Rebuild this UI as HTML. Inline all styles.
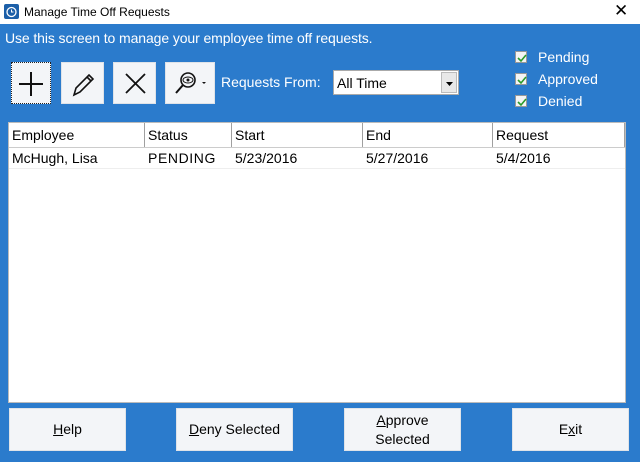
<!DOCTYPE html><html><head><style>
*{margin:0;padding:0;box-sizing:border-box}
body{width:640px;height:462px;background:#2b7bcc;font-family:"Liberation Sans",sans-serif;position:relative;overflow:hidden;color:#000}
.a{position:absolute}
.title{left:0;top:0;width:640px;height:24px;background:#fff;font-size:12px}
.btn{position:absolute;background:#f3f5f8;border:1px solid #dfe3e8}
.w{color:#fff;font-size:14px}
.cb{position:absolute;width:12px;height:12px;background:#f4f4f4;border:1px solid #999}
.cb svg{position:absolute;left:0;top:0}
.th{position:absolute;top:0;height:24px;border-right:1px solid #a0a0a0;font-size:14px;padding:4px 3px}
.td{position:absolute;top:25px;font-size:14px;padding:2px 3px}
.bb{position:absolute;top:408px;width:117px;height:43px;background:#f3f5f8;border:1px solid #dfe3e8;font-size:14px;text-align:center;display:flex;align-items:center;justify-content:center;line-height:19px}
</style></head><body>
<div class="a title">
<div class="a" style="left:4px;top:4px;width:15px;height:15px;background:#1c5fa8;border-radius:2px"><svg width="15" height="15"><circle cx="7.5" cy="8" r="4.5" fill="none" stroke="#fff" stroke-width="1.3"/><path d="M7.5 5.5V8H9.5" stroke="#fff" fill="none"/></svg></div>
<div class="a" style="left:24px;top:5px">Manage Time Off Requests</div>
<div class="a" style="left:614px;top:1px;font-size:17px">✕</div>
</div>
<div class="a w" style="left:5px;top:30px;letter-spacing:-0.1px">Use this screen to manage your employee time off requests.</div>
<div class="btn" style="left:11px;top:62px;width:40px;height:42px;border:1px dotted #222"><svg width="40" height="42"><path d="M19 9V33M7 21H31" stroke="#111" stroke-width="2"/></svg></div>
<div class="btn" style="left:61px;top:62px;width:43px;height:42px"><svg width="43" height="42"><path d="M12 32L14 25L27 12L31 16L18 29Z M25 14L29 18" stroke="#111" stroke-width="1.6" fill="none"/></svg></div>
<div class="btn" style="left:113px;top:62px;width:43px;height:42px"><svg width="43" height="42"><path d="M12 11L31 30M31 11L12 30" stroke="#111" stroke-width="1.8"/></svg></div>
<div class="btn" style="left:165px;top:62px;width:50px;height:42px"><svg width="50" height="42"><circle cx="22" cy="17" r="7" fill="none" stroke="#111" stroke-width="1.6"/><ellipse cx="22" cy="17" rx="5" ry="3" fill="none" stroke="#111"/><circle cx="22" cy="17" r="1.5" fill="#111"/><path d="M17 22L10 30" stroke="#111" stroke-width="2"/><path d="M36 19L40 19L38 21Z" fill="#111"/></svg></div>
<div class="a w" style="left:221px;top:74px">Requests From:</div>
<div class="a" style="left:333px;top:70px;width:126px;height:25px;background:#fff;border:1px solid #aaa;font-size:14px;padding:4px 3px">All Time
<div class="a" style="right:1px;top:1px;width:16px;height:21px;background:#e8e8e8;border:1px solid #bbb"><svg width="16" height="21"><path d="M4 9H11L7.5 13Z" fill="#000"/></svg></div></div>
<div class="cb" style="left:515px;top:51px"><svg width="12" height="12"><path d="M2 6L5 9L10 3" stroke="#2a9a2a" stroke-width="1.6" fill="none"/></svg></div>
<div class="a w" style="left:538px;top:49px">Pending</div>
<div class="cb" style="left:515px;top:73px"><svg width="12" height="12"><path d="M2 6L5 9L10 3" stroke="#2a9a2a" stroke-width="1.6" fill="none"/></svg></div>
<div class="a w" style="left:538px;top:71px">Approved</div>
<div class="cb" style="left:515px;top:95px"><svg width="12" height="12"><path d="M2 6L5 9L10 3" stroke="#2a9a2a" stroke-width="1.6" fill="none"/></svg></div>
<div class="a w" style="left:538px;top:93px">Denied</div>
<div class="a" style="left:8px;top:122px;width:618px;height:281px;background:#fff;border:1px solid #bbb">
<div class="a" style="left:0;top:0;width:616px;height:25px;border-bottom:1px solid #ccc"></div>
<div class="th" style="left:0;width:136px">Employee</div>
<div class="th" style="left:136px;width:87px">Status</div>
<div class="th" style="left:223px;width:131px">Start</div>
<div class="th" style="left:354px;width:130px">End</div>
<div class="th" style="left:484px;width:132px">Request</div>
<div class="a" style="left:0;top:25px;width:616px;height:21px;border-bottom:1px solid #eee"></div>
<div class="td" style="left:0">McHugh, Lisa</div>
<div class="td" style="left:136px;letter-spacing:0.6px">PENDING</div>
<div class="td" style="left:223px">5/23/2016</div>
<div class="td" style="left:354px">5/27/2016</div>
<div class="td" style="left:484px">5/4/2016</div>
</div>
<div class="bb" style="left:9px"><span><u>H</u>elp</span></div>
<div class="bb" style="left:176px"><span><u>D</u>eny Selected</span></div>
<div class="bb" style="left:344px"><span><u>A</u>pprove<br>Selected</span></div>
<div class="bb" style="left:512px"><span>E<u>x</u>it</span></div>
</body></html>
